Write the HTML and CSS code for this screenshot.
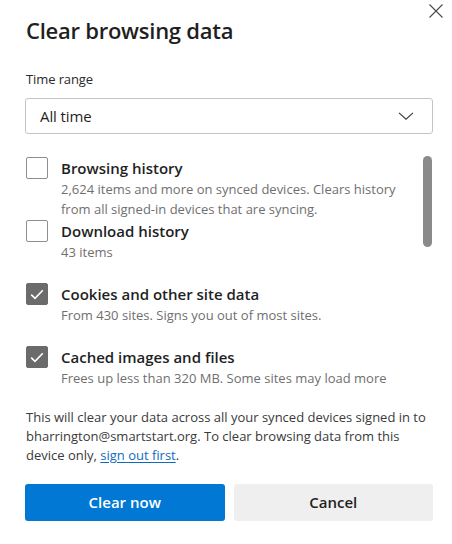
FILE: index.html
```html
<!DOCTYPE html>
<html lang="en">
<head>
<meta charset="utf-8">
<title>Clear browsing data</title>
<link rel="stylesheet" href="styles.css">
</head>
<body>
<div class="dialog">
  <button class="close" aria-label="Close">
    <svg width="14" height="14" viewBox="0 0 14 14"><path d="M0.5 0.5 L13.5 13.5 M13.5 0.5 L0.5 13.5" stroke="#4a4a4a" stroke-width="1.1" fill="none"/></svg>
  </button>
  <h1 class="title">Clear browsing data</h1>
  <div class="field-label">Time range</div>
  <div class="select">
    <span class="select-value">All time</span>
    <svg class="chevron" width="16" height="8" viewBox="0 0 16 8"><path d="M1 0.8 L8 7.2 L15 0.8" stroke="#3a3a3a" stroke-width="1.1" fill="none"/></svg>
  </div>
  <div class="list">
    <div class="items">
      <div class="item">
        <span class="box"></span>
        <div class="item-text">
          <div class="item-label">Browsing history</div>
          <div class="item-desc">2,624 items and more on synced devices. Clears history from all signed-in devices that are syncing.</div>
        </div>
      </div>
      <div class="item">
        <span class="box"></span>
        <div class="item-text">
          <div class="item-label">Download history</div>
          <div class="item-desc">43 items</div>
        </div>
      </div>
      <div class="item">
        <span class="box checked"><svg width="14" height="11" viewBox="0 0 14 11"><path d="M1.2 5.6 L5 9.3 L12.8 1.3" stroke="#fff" stroke-width="1.6" fill="none"/></svg></span>
        <div class="item-text">
          <div class="item-label">Cookies and other site data</div>
          <div class="item-desc">From 430 sites. Signs you out of most sites.</div>
        </div>
      </div>
      <div class="item">
        <span class="box checked"><svg width="14" height="11" viewBox="0 0 14 11"><path d="M1.2 5.6 L5 9.3 L12.8 1.3" stroke="#fff" stroke-width="1.6" fill="none"/></svg></span>
        <div class="item-text">
          <div class="item-label">Cached images and files</div>
          <div class="item-desc nowrap">Frees up less than 320 MB. Some sites may load more</div>
        </div>
      </div>
    </div>
    <div class="scrollbar"><div class="thumb"></div></div>
  </div>
  <p class="note">This will clear your data across all your synced devices signed in to bharrington@smartstart.org. To clear browsing data from this device only, <a href="#" class="link">sign out first</a>.</p>
  <div class="actions">
    <button class="btn primary">Clear now</button>
    <button class="btn secondary">Cancel</button>
  </div>
</div>
</body>
</html>
```
FILE: styles.css
```css
* { box-sizing: border-box; }
html, body {
  margin: 0;
  padding: 0;
  background: #ffffff;
}
body {
  font-family: "Open Sans", "Noto Sans", "Liberation Sans", sans-serif;
  color: #1b1b1b;
  width: 452px;
  height: 544px;
  overflow: hidden;
}
.dialog {
  position: relative;
  padding: 16px 19px 0 25px;
}
.close {
  position: absolute;
  top: 3px;
  right: 8px;
  width: 16px;
  height: 16px;
  padding: 1px;
  margin: 0;
  border: 0;
  background: transparent;
  display: flex;
  align-items: center;
  justify-content: center;
}
.title {
  margin: 0;
  font-size: 22px;
  line-height: 28px;
  font-weight: 600;
  letter-spacing: -0.25px;
  color: #1f1f1f;
  padding-left: 1px;
}
.field-label {
  margin-top: 26px;
  font-size: 13px;
  line-height: 18px;
  color: #2a2a2a;
  padding-left: 1px;
  letter-spacing: -0.1px;
}
.select {
  margin-top: 10px;
  height: 36px;
  border: 1px solid #c4c4c4;
  border-radius: 3px;
  display: flex;
  align-items: center;
  justify-content: space-between;
  padding: 0 18px 0 14px;
}
.select-value {
  font-size: 15px;
  line-height: 34px;
  color: #1f1f1f;
  letter-spacing: -0.1px;
}
.chevron { display: block; }
.list {
  margin-top: 22px;
  height: 240px;
  display: flex;
  overflow: hidden;
}
.items {
  flex: 1;
  padding-top: 1px;
  padding-right: 14px;
}
.item {
  display: flex;
  min-height: 63px;
}
.box {
  flex: none;
  width: 22px;
  height: 22px;
  border: 1px solid #8e8e8e;
  border-radius: 2px;
  margin-left: 1px;
  display: flex;
  align-items: center;
  justify-content: center;
}
.box.checked {
  background: #6b6b6b;
  border-color: #6b6b6b;
}
.item-text {
  margin-left: 13px;
  flex: 1;
}
.item-label {
  font-size: 15px;
  line-height: 22px;
  font-weight: 600;
  color: #1f1f1f;
  letter-spacing: 0;
}
.item-desc {
  font-size: 13px;
  line-height: 20px;
  color: #6f6f6f;
  letter-spacing: 0;
}
.nowrap { white-space: nowrap; }
.scrollbar {
  flex: none;
  width: 10px;
}
.thumb {
  width: 9px;
  height: 91px;
  border-radius: 5px;
  background: #8a8a8a;
}
.note {
  margin: 12px 0 0;
  font-size: 13px;
  line-height: 19px;
  color: #3a3a3a;
  padding-left: 1px;
  letter-spacing: 0;
}
.link {
  color: #0f6cbd;
  text-decoration: underline;
  text-underline-offset: 2px;
}
.actions {
  margin-top: 19px;
  display: flex;
  gap: 9px;
}
.btn {
  flex: 1;
  height: 37px;
  border: 0;
  border-radius: 3px;
  font-family: inherit;
  font-size: 15px;
  line-height: 37px;
  font-weight: 600;
  letter-spacing: 0;
  padding: 0;
}
.primary {
  background: #0078d4;
  color: #ffffff;
}
.secondary {
  background: #efefef;
  color: #1f1f1f;
}
```
